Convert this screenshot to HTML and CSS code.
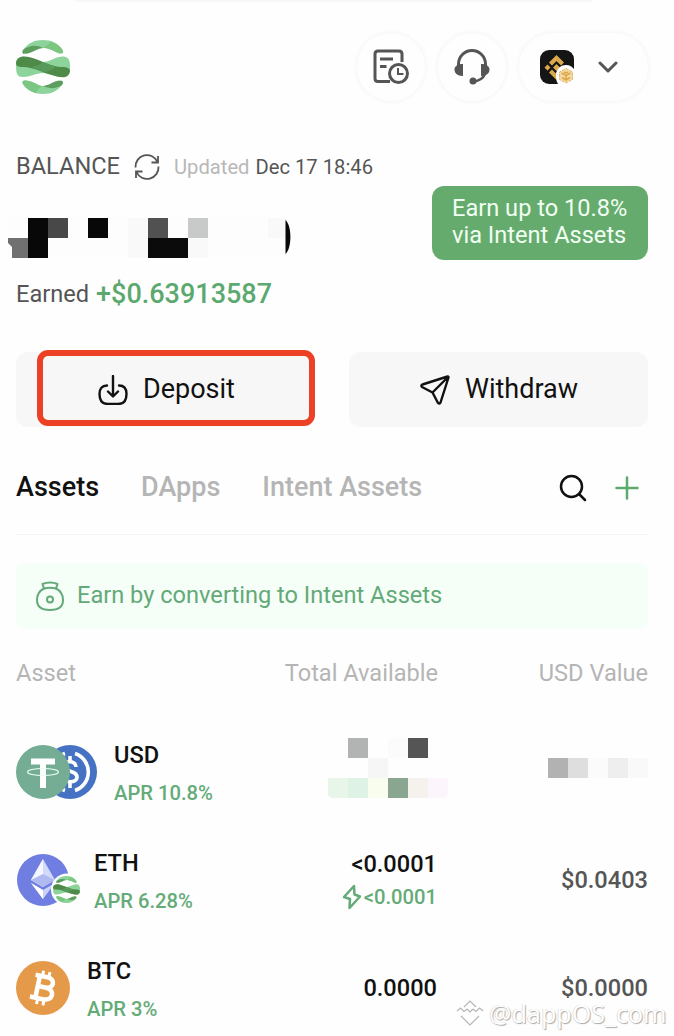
FILE: index.html
```html
<!DOCTYPE html>
<html lang="en">
  <head>
    <meta charset="UTF-8" />
    <meta name="viewport" content="width=device-width, initial-scale=1.0" />
    <link rel="stylesheet" href="styles.css">
    <title>dappOS Wallet</title>
  </head>
  <body>
    <!-- shared logo -->
    <svg class="defs" width="0" height="0">
      <defs>
        <g id="logo">
          <path d="M6.500 11C11 3 19 0 27 0S43 3 47 11C48 14 44 14 41 12.500C36 10 32 8 27 8S17 13 11 13.500C8 14 6 13 6.500 11Z" fill="#8dd49c"/>
          <path d="M27 8C20 4 12 6 7 10C5 14 9 14 13 13C18 11.500 22 8 27 8Z" fill="#5d9e5f"/>
          <path d="M34 2C41 3 46 8 47 11C48 14 44 14 41 12.500C36 10 32 8 27 7.500C31 6 33 4 34 2Z" fill="#7bc681"/>
          <path d="M0 24C0 18 4 16 9 17C15 18 21 22 27 22S39 17 46 16.500C52 16 54 20 54 25C54 33 53 37 46 37C39 37 34 33 27 33S14 37 7 37C1 37 0 34 0 24Z" fill="#8dd49c"/>
          <path d="M0 23C1 16 8 16 13 17C25 20 35 27 46 27C51 27 54 28 54 31C53 38 47 38 41 36.500C29 34 18 27 7 27C2 27 0 26 0 23Z" fill="#4e8a48"/>
          <path d="M27 22L40 27C37 29 32 32 28 32L15 27C19 26 24 25 27 22Z" fill="#589a5b"/>
          <path d="M6.500 43C11 51 19 54 27 54S43 51 47 43C48 40 44 40 41 41.500C36 44 32 46 27 46S17 41 11 40.500C8 40 6 41 6.500 43Z" fill="#8dd49c"/>
          <path d="M27 46C34 49 40 49 46 45C49 41 45 40.500 41 41C36 42 32 46 27 46Z" fill="#5d9e5f"/>
          <path d="M20 53C13 51 8 47 6.500 43C6 40 9 40 12 41C18 42 22 45 26 46.500C23 48 21 50 20 53Z" fill="#7bc681"/>
        </g>
      </defs>
    </svg>

    <div class="sheet-edge"></div>

    <div class="page">
      <header class="header">
        <svg class="logo" width="54" height="54" viewBox="0 0 54 54"><use href="#logo"/></svg>
        <div class="actions">
          <div class="circle">
            <svg width="36" height="36" viewBox="0 0 36 36" fill="none" stroke="#555" stroke-width="3">
              <path d="M17 32.500H5Q2 32.500 2 29.500V5Q2 2 5 2H26Q29 2 29 5V13"/>
              <path d="M7 10H20M7 17.500H13.500"/>
              <circle cx="25.500" cy="24.500" r="9"/>
              <path d="M25 19V25H30.500" stroke-width="2"/>
            </svg>
          </div>
          <div class="circle">
            <svg width="36" height="36" viewBox="0 0 36 36" fill="none" stroke="#555" stroke-width="3">
              <path d="M4.500 18V15A13.500 13.500 0 0 1 31.500 15V18"/>
              <path d="M9 15V27C3 27 .5 24 .5 20.500S4 15 9 15ZM27 15V27C33 27 35.500 24 35.500 20.500S32 15 27 15Z" fill="#555" stroke="none"/>
              <path d="M31 25Q28 32 19 32.500" stroke-width="2.500"/>
              <circle cx="19" cy="32" r="3.500" fill="#555" stroke="none"/>
            </svg>
          </div>
          <div class="pill">
            <svg width="36" height="36" viewBox="0 0 36 36">
              <rect x="1" y="1" width="34" height="34" rx="9" fill="#151515"/>
              <g fill="#dba94c">
                <path d="M17.500 6L25 13.500L22 16.500L17.500 12L13 16.500L10 13.500Z"/>
                <path d="M8.500 15.500L11.500 18.500L8.500 21.500L5.500 18.500ZM17.500 15L21 18.500L17.500 22L14 18.500Z"/>
                <path d="M10 23.500L13 20.500L17.500 25L20 28L17.500 31Z"/>
              </g>
              <path d="M17 27A10 10 0 0 1 35 20V35H19Q17 32 17 27Z" fill="#fff"/>
              <path d="M27 19.500L33.500 23V30.500L27 34L20.500 30.500V23Z" fill="#f4d9a5" stroke="#e2b96c" stroke-width="1" stroke-dasharray="3 1"/>
              <path d="M22.500 24L27 26.500L31.500 24M27 26.500V31.500M23 28.500L27 31L31 28.500M25 23L27 24L29 23" stroke="#dca84a" stroke-width="1.500" fill="none"/>
            </svg>
            <svg width="20" height="14" viewBox="0 0 20 14" fill="none" stroke="#555" stroke-width="3" stroke-linecap="round" stroke-linejoin="round"><path d="M2 3L10 11L18 3"/></svg>
          </div>
        </div>
      </header>

      <section class="summary">
        <div class="summary-info">
          <div class="balance-row">
            <span class="balance">BALANCE</span>
            <svg class="refresh" width="28" height="28" viewBox="0 0 28 28" fill="none" stroke="#555" stroke-width="1.800">
              <path d="M2.500 14.500A11.500 11.500 0 0 1 24.500 9M25 3V9.500H18.500"/>
              <path d="M25.500 13.500A11.500 11.500 0 0 1 3.500 19M3 25V18.500H9.500"/>
            </svg>
            <span class="updated">Updated</span>
            <span class="date">Dec 17 18:46</span>
          </div>
          <svg class="mosaic" width="284" height="40" viewBox="0 0 284 40">
            <path d="M0 0H280V40H0Z" fill="#fdfdfd"/>
            <path d="M0 20H20V40H4V29L0 25Z" fill="#707070"/>
            <path d="M20 0H40V40H20ZM80 0H100V20H80Z" fill="#080808"/>
            <path d="M40 0H60V20H40Z" fill="#484848"/>
            <path d="M120 0H140V40H120Z" fill="#f9f9f9"/>
            <path d="M140 0H160V20H140Z" fill="#515151"/>
            <path d="M140 20H180V40H140Z" fill="#0b0b0b"/>
            <path d="M180 0H200V20H180Z" fill="#c8caca"/>
            <path d="M180 20H200V40H180ZM260 0H278V20H260Z" fill="#f9f9f9"/>
            <path d="M277.500 2C284 8 284 30 277.500 36Z" fill="#080808"/>
          </svg>
          <div class="earned-row">
            <span class="earned">Earned</span>
            <span class="earned-value">+$0.63913587</span>
          </div>
        </div>
        <div class="promo">Earn up to 10.8%<br>via Intent Assets</div>
      </section>

      <section class="buttons">
        <div class="button deposit">
          <svg width="30" height="30" viewBox="0 0 30 30" fill="none" stroke="#111" stroke-width="2.400" stroke-linecap="round" stroke-linejoin="round">
            <path d="M15 1V21M10 16.500L15 21.500L20 16.500"/>
            <path d="M9 10.500C4 10.500 1.500 13.500 1.500 19C1.500 26 4 29 10 29H20C26 29 28.500 26 28.500 19C28.500 13.500 26 10.500 21 10.500"/>
          </svg>
          <span>Deposit</span>
          <div class="highlight"></div>
        </div>
        <div class="button withdraw">
          <svg width="30" height="30" viewBox="0 0 30 30" fill="none" stroke="#111" stroke-width="2.400" stroke-linejoin="round">
            <path d="M27.500 1.500L2.500 9.500Q.5 10.500 2 12L12.500 17.500L18 28Q19.500 29.500 20.500 27.500L28.500 2.500Q28.500 1 27.500 1.500ZM12.500 17.500L28 2"/>
          </svg>
          <span>Withdraw</span>
        </div>
      </section>

      <nav class="tabs">
        <span class="tab active">Assets</span>
        <span class="tab">DApps</span>
        <span class="tab">Intent Assets</span>
        <svg class="search" width="28" height="28" viewBox="0 0 28 28" fill="none" stroke="#111" stroke-width="2.500" stroke-linecap="round"><circle cx="12.500" cy="12.500" r="10.500"/><path d="M20 20L26 26"/></svg>
        <svg class="plus" width="24" height="24" viewBox="0 0 24 24" fill="none" stroke="#5bab6c" stroke-width="2.500" stroke-linecap="round"><path d="M12 1.500V22.500M1.500 12H22.500"/></svg>
      </nav>

      <div class="banner">
        <svg width="28" height="30" viewBox="0 0 28 30" fill="none" stroke="#64a979" stroke-width="2" stroke-linejoin="round">
          <path d="M8 7.500L6.500 3Q14 0 21.500 3L20 7.500Q14 6 8 7.500Z"/>
          <path d="M8 7.500C3 10 1 14 1 19C1 26 5 29 14 29S27 26 27 19C27 14 25 10 20 7.500"/>
          <circle cx="14" cy="18.500" r="3"/>
        </svg>
        <span>Earn by converting to Intent Assets</span>
      </div>

      <div class="row table-head">
        <span>Asset</span>
        <span>Total Available</span>
        <span>USD Value</span>
      </div>

      <div class="row">
        <div class="asset usd">
          <svg width="82" height="54" viewBox="0 0 82 54">
            <circle cx="54" cy="27" r="27" fill="#4672c4"/>
            <g fill="none" stroke="#fff" stroke-width="3.600">
              <path d="M59 8.500A19.500 19.500 0 0 1 59 45.500M49 8.500A19.500 19.500 0 0 0 49 45.500"/>
              <path d="M60 22C60 15 47 15 47 21C47 27 61 25 61 32C61 39 47 38 47 31M54 11V17M54 37V43"/>
            </g>
            <circle cx="27" cy="27" r="27" fill="#74ad94"/>
            <path d="M15 13.500H39V19.500H30V43H24V19.500H15Z" fill="#fff"/>
            <ellipse cx="27" cy="27" rx="15.500" ry="3.500" fill="none" stroke="#e9fff5" stroke-width="1.200"/>
          </svg>
          <div class="names"><span class="name">USD</span><span class="apr">APR 10.8%</span></div>
        </div>
        <svg class="total-mosaic" width="120" height="60" viewBox="0 0 120 60">
          <path d="M20 0H40V20H20Z" fill="#b2b4b3"/>
          <path d="M60 0H80V20H60Z" fill="#fbfbfb"/>
          <path d="M80 0H100V20H80Z" fill="#555"/>
          <path d="M40 20H60V40H40Z" fill="#f6f6f6"/>
          <path d="M0 40H20V60H3L0 57Z" fill="#e7f6e8"/>
          <path d="M20 40H40V60H20Z" fill="#dff2e6"/>
          <path d="M40 40H60V60H40Z" fill="#f8fdee"/>
          <path d="M60 40H80V60H60Z" fill="#8aa691"/>
          <path d="M80 40H100V60H80Z" fill="#f5f2ed"/>
          <path d="M100 40H120V57L117 60H100Z" fill="#fcf5fc"/>
        </svg>
        <svg class="value-mosaic" width="100" height="20" viewBox="0 0 100 20">
          <path d="M0 0H20V20H0Z" fill="#b2b2b2"/>
          <path d="M20 0H40V20H20Z" fill="#dedede"/>
          <path d="M40 0H60V20H40Z" fill="#fbfbfb"/>
          <path d="M60 0H80V20H60Z" fill="#eee"/>
          <path d="M80 0H100V20H80Z" fill="#f9f9f9"/>
        </svg>
      </div>

      <div class="row">
        <div class="asset eth">
          <svg width="65" height="54" viewBox="0 0 65 54">
            <circle cx="27" cy="27" r="26" fill="#6f7ee0"/>
            <path d="M27 6L39 27L27 34L15 27Z" fill="#d3d9fa"/>
            <path d="M27 6V34L15 27Z" fill="#f5f6ff"/>
            <path d="M27 21L39 27L27 34L15 27Z" fill="#b0baf1"/>
            <path d="M15 30L27 37L39 30L27 46Z" fill="#cbd2fa"/>
            <path d="M15 30L27 37V46Z" fill="#fff"/>
            <circle cx="51" cy="36.500" r="16" fill="#fff"/>
            <use href="#logo" transform="translate(37 23) scale(.5)"/>
          </svg>
          <div class="names"><span class="name">ETH</span><span class="apr">APR 6.28%</span></div>
        </div>
        <div class="total">
          <span>&lt;0.0001</span>
          <div class="boost">
            <svg width="20" height="26" viewBox="0 0 20 26" fill="none" stroke="#64ab78" stroke-width="2.500" stroke-linejoin="round"><path d="M12 2L2 13L8 15L7.500 24L18 12.500L12.500 10.500Z"/></svg>
            <span>&lt;0.0001</span>
          </div>
        </div>
        <span class="value">$0.0403</span>
      </div>

      <div class="row">
        <div class="asset btc">
          <svg width="54" height="54" viewBox="0 0 54 54">
            <circle cx="27" cy="27" r="27" fill="#e59a49"/>
            <g transform="rotate(12 27 27)" fill="none" stroke="#fff">
              <path d="M21.500 15V39M17 15.500H29C38 15.500 38 26 29 26H22M29 26C40 26 40 38 29 38H16" stroke-width="4.600"/>
              <path d="M24 10V16M30.500 10V16M24 38V44M30.500 38V44" stroke-width="3"/>
            </g>
          </svg>
          <div class="names"><span class="name">BTC</span><span class="apr">APR 3%</span></div>
        </div>
        <div class="total"><span>0.0000</span></div>
        <span class="value">$0.0000</span>
      </div>
    </div>

    <div class="watermark">
      <svg width="28" height="28" viewBox="0 0 28 28" fill="none" stroke="#b5b5b5" stroke-width="1.200">
        <path d="M8 8L14 2L20 8M1 12L4.500 9L8 12.500L11 10M27 12L23.500 9L20 12.500L17 10M11 10L14 13L17 10M5 17L14 26L23 17"/>
      </svg>
      <span>@dappOS_com</span>
    </div>
  </body>
</html>
```
FILE: styles.css
```css
* {
    box-sizing: border-box;
}
body {
    margin: 0;
    height: 1036px;
    position: relative;
    overflow: hidden;
    background: #fefefe;
    color: #111;
    font-family: Roboto, "Liberation Sans", sans-serif;
    font-size: 23.6px;
    white-space: nowrap;
}
svg {
    display: block;
    flex: none;
}
.defs {
    position: absolute;
}
.sheet-edge {
    height: 2px;
    width: 518px;
    margin-left: 75px;
    background: #f6f6f6;
    border-radius: 0 0 8px 8px;
}
.page {
    width: 632px;
    margin-left: 16px;
}

/* header */
.header {
    height: 130px;
    display: flex;
    align-items: center;
    justify-content: space-between;
}
.actions {
    display: flex;
    gap: 13px;
}
.circle,
.pill {
    width: 68px;
    height: 68px;
    border-radius: 34px;
    display: flex;
    align-items: center;
    justify-content: center;
    box-shadow: 0 0 4px 1px #f5f5f5;
}
.pill {
    width: 129px;
    padding-right: 11px;
    gap: 23px;
}

/* balance */
.summary {
    height: 220px;
    display: flex;
    justify-content: space-between;
    color: #555;
}
.balance-row {
    height: 30px;
    margin-top: 19px;
    display: flex;
    align-items: center;
}
.balance {
    width: 103px;
}
.refresh {
    margin: 1px 13px 0 14px;
}
.updated,
.date {
    margin-top: 1px;
    font-size: 20.2px;
}
.updated {
    color: #b8b8b8;
    margin-right: 6px;
}
.mosaic {
    margin: 37px 0 0 -8px;
}
.earned-row {
    height: 30px;
    margin-top: 21px;
    display: flex;
    align-items: center;
}
.earned-value {
    margin-left: 7px;
    color: #5ca970;
    font-size: 27px;
    font-weight: 500;
}
.promo {
    width: 216px;
    height: 74px;
    margin-top: 54px;
    padding: 9px 0 0 20px;
    border-radius: 12px;
    background: #66ab6e;
    color: #f0fff2;
    line-height: 27px;
}

/* deposit / withdraw */
.buttons {
    display: grid;
    grid-template-columns: 299px 299px;
    justify-content: space-between;
}
.button {
    height: 75px;
    position: relative;
    display: flex;
    align-items: center;
    border-radius: 12px;
    background: #f7f7f7;
    font-size: 27px;
}
.button span {
    padding-bottom: 2px;
}
.deposit {
    padding-left: 82px;
    gap: 15px;
}
.withdraw {
    padding-left: 71px;
    gap: 15px;
}
.highlight {
    position: absolute;
    inset: -2px 0 1px 21px;
    border: 6px solid #ed4126;
    border-radius: 11px;
}

/* tabs */
.tabs {
    height: 108px;
    padding-top: 15px;
    display: flex;
    align-items: center;
    border-bottom: 1px solid #f4f4f4;
}
.tab {
    margin-right: 42px;
    padding-bottom: 2px;
    color: #b5b5b5;
    font-size: 27px;
    font-weight: 500;
}
.tab.active {
    color: #111;
}
.search {
    margin-left: auto;
}
.plus {
    margin: 0 9px 0 28px;
}
.banner {
    height: 66px;
    margin-top: 28px;
    padding-left: 20px;
    display: flex;
    align-items: center;
    gap: 13px;
    border-radius: 8px;
    background: #f5fff7;
    color: #64a979;
}
.banner span {
    padding-bottom: 2px;
}

/* asset list */
.row {
    height: 108px;
    display: grid;
    grid-template-columns: 260px 162px 210px;
    align-items: center;
    justify-items: end;
}
.row > :first-child {
    justify-self: start;
}
.table-head {
    height: 89px;
}
.table-head span {
    padding-bottom: 1px;
    color: #b5b5b5;
}
.asset {
    display: flex;
    align-items: center;
    gap: 16px;
}
.eth {
    gap: 13px;
}
.btc {
    gap: 17px;
}
.names {
    display: flex;
    flex-direction: column;
    gap: 11px;
    padding-top: 5px;
    font-weight: 500;
}
.name {
    line-height: 27px;
}
.apr {
    color: #64ab78;
    font-size: 20.2px;
    line-height: 27px;
}
.total-mosaic {
    margin: -8px -10px 0 0;
}
.value-mosaic {
    margin-top: -8px;
}
.total {
    display: flex;
    flex-direction: column;
    align-items: flex-end;
    gap: 6px;
    padding: 0 1px 1px 0;
    font-weight: 500;
}
.boost {
    display: flex;
    align-items: center;
    gap: 2px;
    color: #64ab78;
    font-size: 20.2px;
}
.value {
    padding-bottom: 1px;
    color: #555;
    font-weight: 500;
}

.watermark {
    position: absolute;
    left: 456px;
    top: 997px;
    display: flex;
    align-items: center;
    gap: 5px;
    color: #fff;
    font-family: "Noto Sans", sans-serif;
    font-size: 25px;
    line-height: 32px;
    text-shadow: 1px 1px 1px #aaa, -0.5px -0.5px 0 #ccc;
}
```
